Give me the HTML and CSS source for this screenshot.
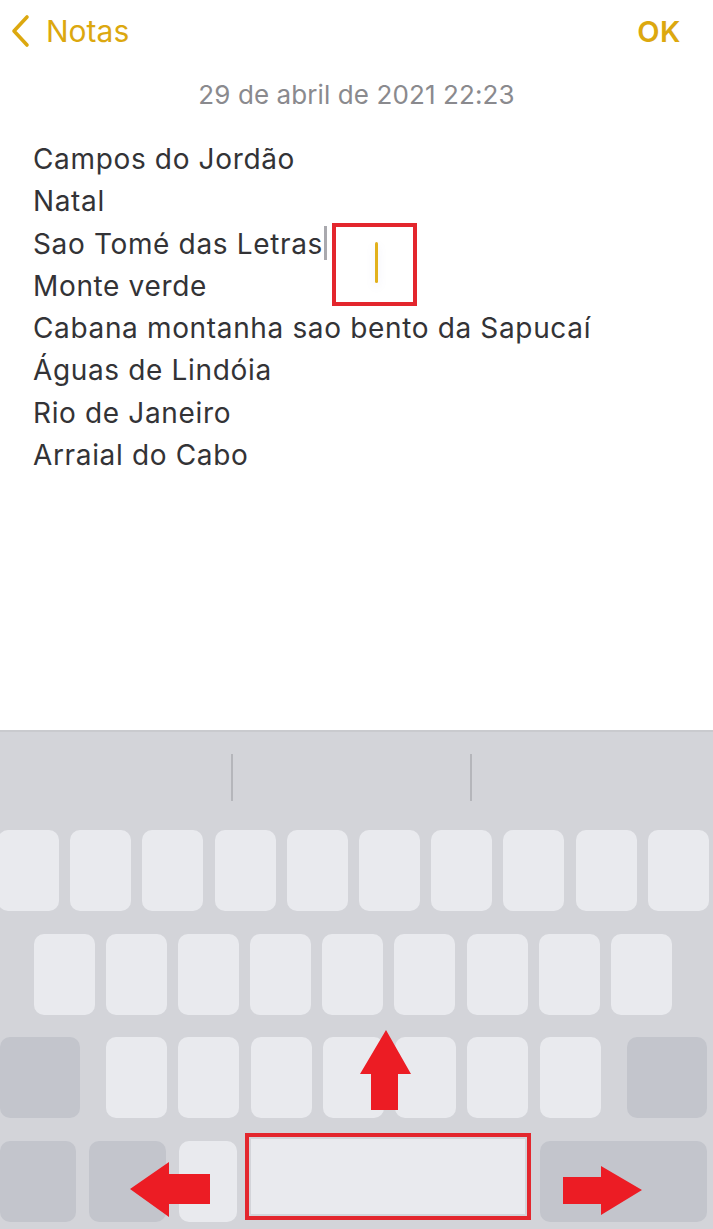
FILE: index.html
```html
<!DOCTYPE html>
<html lang="pt">
<head>
<meta charset="utf-8">
<link rel="stylesheet" href="styles.css">
</head>
<body>
<div class="screen">
  <header class="nav">
    <div class="back">
      <svg class="chev" width="22" height="34" viewBox="0 0 22 34"><path d="M18 3 L5 17 L18 31" fill="none" stroke="currentColor" stroke-width="3.6" stroke-linecap="round" stroke-linejoin="round"/></svg>
      <span class="back-label">Notas</span>
    </div>
    <span class="ok">OK</span>
  </header>
  <div class="date">29 de abril de 2021 22:23</div>
  <div class="note">
    <div class="line">Campos do Jordão</div>
    <div class="line">Natal</div>
    <div class="line">Sao Tomé das Letras<span class="caret"></span></div>
    <div class="line">Monte verde</div>
    <div class="line">Cabana montanha sao bento da Sapucaí</div>
    <div class="line">Águas de Lindóia</div>
    <div class="line">Rio de Janeiro</div>
    <div class="line">Arraial do Cabo</div>
    <div class="float-box"><span class="float-caret"></span></div>
  </div>
  <div class="keyboard">
    <div class="suggest">
      <span class="div"></span>
      <span class="div"></span>
    </div>
    <div class="row row1">
      <span class="key"></span><span class="key"></span><span class="key"></span><span class="key"></span><span class="key"></span>
      <span class="key"></span><span class="key"></span><span class="key"></span><span class="key"></span><span class="key"></span>
    </div>
    <div class="row row2">
      <span class="key"></span><span class="key"></span><span class="key"></span><span class="key"></span><span class="key"></span>
      <span class="key"></span><span class="key"></span><span class="key"></span><span class="key"></span>
    </div>
    <div class="row row3">
      <span class="key dark shift"></span>
      <div class="letters">
        <span class="key"></span><span class="key"></span><span class="key"></span><span class="key"></span>
        <span class="key"></span><span class="key"></span><span class="key"></span>
      </div>
      <span class="key dark bksp"></span>
    </div>
    <div class="row row4">
      <span class="key dark k123"></span>
      <span class="key dark globe"></span>
      <span class="key mic"></span>
      <span class="space-box"><span class="key space"></span></span>
      <span class="key dark ret"></span>
    </div>
    <svg class="arrow up" width="56" height="84" viewBox="0 0 56 84"><path d="M28 1 L53 45 L40 45 L40 81 L13 81 L13 45 L2 45 Z" fill="#ec1c24"/></svg>
    <svg class="arrow left" width="84" height="58" viewBox="0 0 84 58"><path d="M1 28 L40 1 L40 13 L81 13 L81 43 L40 43 L40 56 Z" fill="#ec1c24"/></svg>
    <svg class="arrow right" width="82" height="52" viewBox="0 0 82 52"><path d="M80 25 L39 1 L39 12 L1 12 L1 39 L39 39 L39 50 Z" fill="#ec1c24"/></svg>
  </div>
</div>
</body>
</html>
```
FILE: styles.css
```css
* { box-sizing: border-box; }
html, body { margin: 0; padding: 0; background: #fff; }
.screen {
  width: 713px;
  height: 1229px;
  display: flex;
  flex-direction: column;
  overflow: hidden;
  font-family: Inter, "Liberation Sans", Arial, sans-serif;
  position: relative;
}
.nav {
  height: 62px;
  display: flex;
  align-items: center;
  justify-content: space-between;
  padding: 0 32px 0 9px;
  color: #dca80f;
}
.back { display: flex; align-items: center; gap: 15px; }
.chev { display: block; }
.back-label { font-size: 30px; letter-spacing: 0; }
.ok { font-size: 29px; font-weight: 600; letter-spacing: 0.5px; }
.date {
  text-align: center;
  color: #8a8a8e;
  font-size: 26px;
  letter-spacing: 0.1px;
  height: 44px;
  line-height: 44px;
  margin-top: 11px;
}
.note {
  position: relative;
  padding: 21px 0 0 33px;
  color: #333336;
  font-size: 28px;
  letter-spacing: 0.65px;
  line-height: 42.3px;
  flex: 1;
}
.line { white-space: nowrap; }
.caret {
  display: inline-block;
  width: 3px;
  height: 34px;
  background: #a9a9ae;
  vertical-align: -6px;
  margin-left: 1px;
}
.float-box {
  position: absolute;
  left: 332px;
  top: 106px;
  width: 85px;
  height: 83px;
  border: 4px solid #e3262d;
  background: #fff;
}
.float-caret {
  position: absolute;
  left: 39px;
  top: 15px;
  width: 3px;
  height: 41px;
  border-radius: 2px;
  background: #e2b11d;
  box-shadow: 0 4px 8px rgba(130,130,200,0.15);
}
.keyboard {
  position: relative;
  height: 499px;
  flex: none;
  background: #d3d4d9;
  border-top: 2px solid #c9cace;
}
.suggest {
  height: 98px;
  display: flex;
  align-items: flex-start;
  padding-top: 22px;
}
.suggest .div {
  width: 2px;
  height: 47px;
  background: #b5b6bb;
}
.suggest .div:first-child { margin-left: 231px; }
.suggest .div:last-child { margin-left: 237px; }
.key {
  display: block;
  height: 81px;
  background: #e9eaee;
  border-radius: 10px;
}
.key.dark { background: #c3c5cc; }
.row { display: grid; margin-bottom: 22.5px; }
.row1 {
  grid-template-columns: repeat(10, 61px);
  column-gap: 11.2px;
  margin-left: -2px;
}
.row2 {
  grid-template-columns: repeat(9, 61px);
  column-gap: 11.1px;
  margin-left: 34px;
}
.row3 {
  grid-template-columns: 80px 1fr 80px;
  column-gap: 26px;
  margin-right: 6px;
}
.letters {
  display: grid;
  grid-template-columns: repeat(7, 61px);
  column-gap: 11.3px;
}
.row4 {
  display: flex;
  align-items: flex-start;
  margin-right: 6px;
}
.k123 { width: 76px; }
.globe { width: 77px; margin-left: 13px; }
.mic { width: 58px; margin-left: 13px; }
.space-box {
  display: block;
  width: 286px;
  height: 87px;
  margin-left: 8px;
  margin-top: -8px;
  border: 4px solid #e3262d;
  padding: 2px;
}
.space-box .space { height: 75px; border-radius: 0; }
.ret { width: 167px; margin-left: 9px; }
.arrow { position: absolute; display: block; }
.arrow.up { left: 358px; top: 297px; }
.arrow.left { left: 129px; top: 429px; }
.arrow.right { left: 562px; top: 433px; }
```
